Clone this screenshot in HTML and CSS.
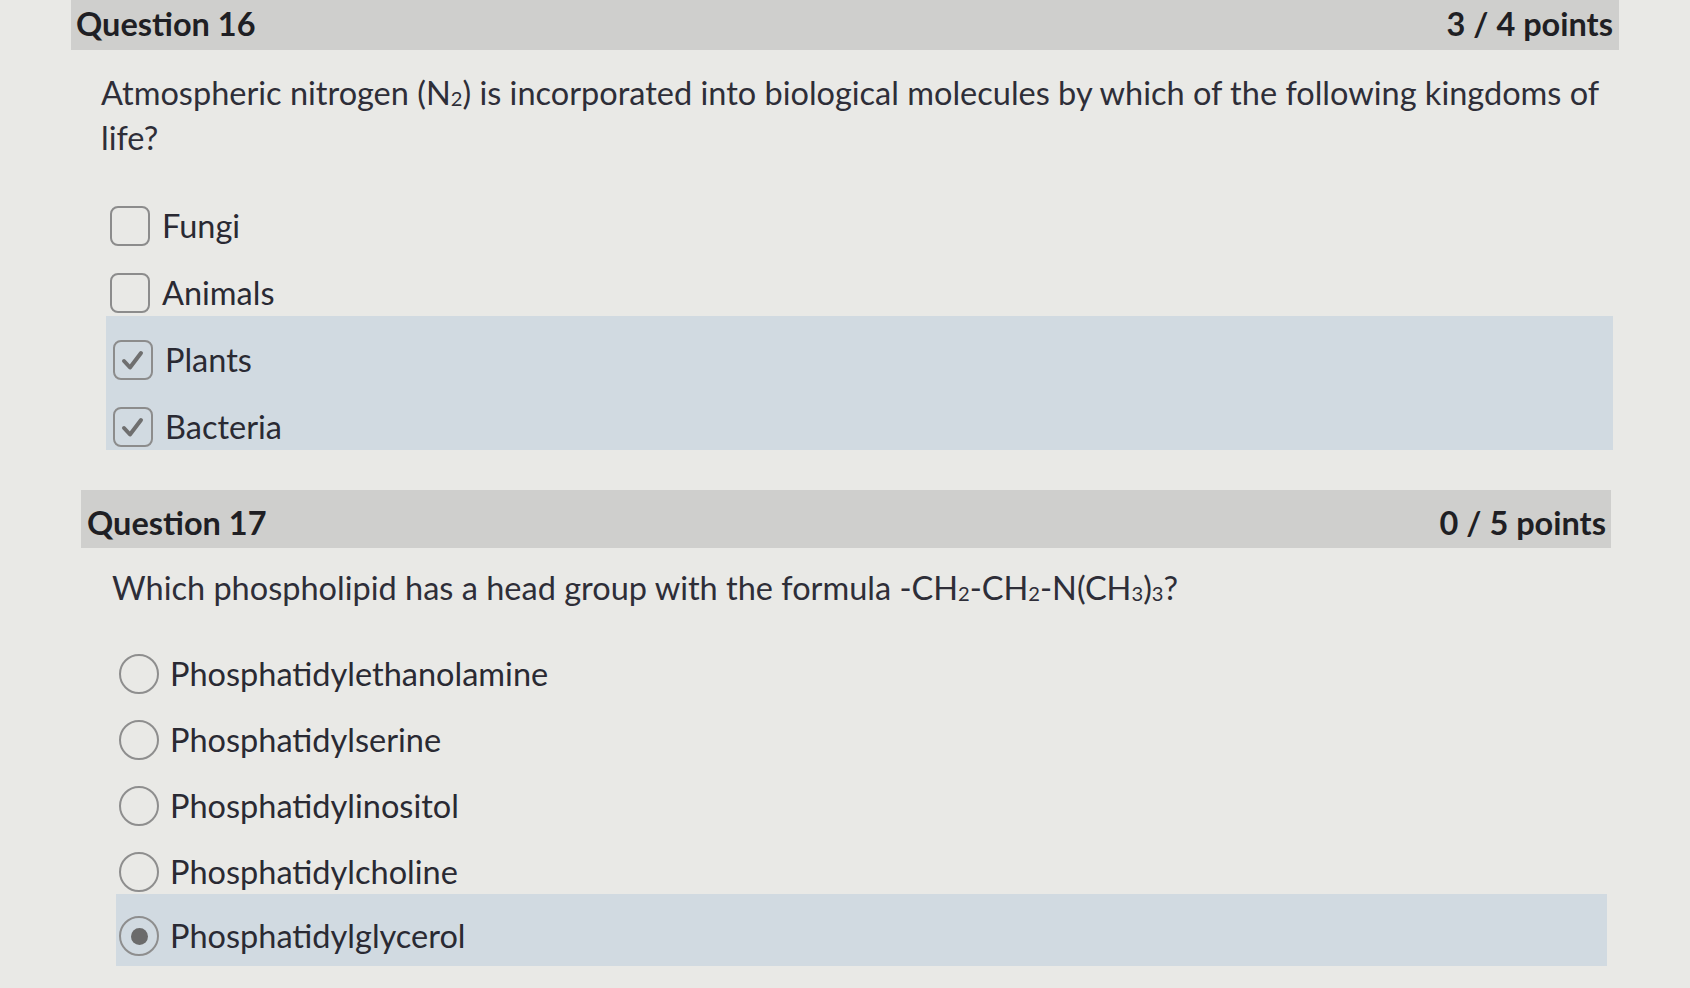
FILE: index.html
```html
<!DOCTYPE html>
<html lang="en">
<head>
<meta charset="utf-8">
<title>Quiz review</title>
<link rel="stylesheet" href="styles.css">
</head>
<body>
<div class="page">
  <section class="question q16">
    <header class="q-header">
      <span class="q-title">Question 16</span>
      <span class="q-points">3 / 4 points</span>
    </header>
    <p class="q-text">Atmospheric nitrogen (N<span class="sub">2</span>) is incorporated into biological molecules by which of the following kingdoms of life?</p>
    <ul class="options">
      <li class="option"><span class="checkbox"></span><span class="label">Fungi</span></li>
      <li class="option"><span class="checkbox"></span><span class="label">Animals</span></li>
      <li class="option selected"><span class="checkbox checked"><svg viewBox="0 0 40 40" width="40" height="40"><path d="M11 21 L17 27.5 L28 13" fill="none" stroke="#6f6f6f" stroke-width="4" stroke-linecap="round" stroke-linejoin="round"/></svg></span><span class="label">Plants</span></li>
      <li class="option selected"><span class="checkbox checked"><svg viewBox="0 0 40 40" width="40" height="40"><path d="M11 21 L17 27.5 L28 13" fill="none" stroke="#6f6f6f" stroke-width="4" stroke-linecap="round" stroke-linejoin="round"/></svg></span><span class="label">Bacteria</span></li>
    </ul>
  </section>

  <section class="question q17">
    <header class="q-header">
      <span class="q-title">Question 17</span>
      <span class="q-points">0 / 5 points</span>
    </header>
    <p class="q-text">Which phospholipid has a head group with the formula -CH<span class="sub">2</span>-CH<span class="sub">2</span>-N(CH<span class="sub">3</span>)<span class="sub">3</span>?</p>
    <ul class="options">
      <li class="option"><span class="radio"></span><span class="label">Phosphatidylethanolamine</span></li>
      <li class="option"><span class="radio"></span><span class="label">Phosphatidylserine</span></li>
      <li class="option"><span class="radio"></span><span class="label">Phosphatidylinositol</span></li>
      <li class="option"><span class="radio"></span><span class="label">Phosphatidylcholine</span></li>
      <li class="option selected"><span class="radio on"></span><span class="label">Phosphatidylglycerol</span></li>
    </ul>
  </section>
</div>
</body>
</html>
```

FILE: styles.css
```css
html, body {
  margin: 0;
  padding: 0;
}

body {
  background: #e9e9e6;
  font-family: Lato, "Open Sans", "Liberation Sans", sans-serif;
  color: #2c2c34;
  height: 988px;
  overflow: hidden;
}

.page {
  margin-top: -8px;
}

.question {
  display: flex;
  flex-direction: column;
}

.q16 {
  margin: 0 71px 0 71px;
  width: 1548px;
}

.q17 {
  margin: 40px 0 0 81px;
  width: 1530px;
}

.q-header {
  display: flex;
  justify-content: space-between;
  align-items: center;
  height: 58px;
  padding: 4px 6px 0 5px;
  box-sizing: border-box;
  background: #cfcfcd;
  font-weight: 700;
  font-size: 32.5px;
  color: #1f1f24;
}

.q17 .q-header {
  padding: 6px 5px 0 6px;
}

.q-text {
  margin: 0;
  padding: 20px 0 0 30px;
  font-size: 32.5px;
  line-height: 45px;
  color: #2e2e38;
}

.q17 .q-text {
  padding: 17px 0 0 31px;
}

.sub {
  font-size: 0.62em;
  line-height: 0;
  vertical-align: -0.05em;
}

.options {
  list-style: none;
  margin: 22px 0 0 35px;
  padding: 0;
  display: flex;
  flex-direction: column;
}

.q16 .options {
  margin-left: 35px;
  margin-right: 6px;
}

.q17 .options {
  margin: 20px 4px 0 35px;
}

.option {
  display: flex;
  align-items: center;
  gap: 12px;
  height: 67px;
  box-sizing: border-box;
  padding: 24px 0 3px 4px;
  font-size: 32.5px;
  color: #2a2a33;
}

.q17 .option {
  height: 66px;
  padding-left: 3px;
  gap: 11px;
}

.q17 .option.selected {
  height: 72px;
  padding-top: 22px;
  padding-bottom: 10px;
}

.option.selected {
  background: #d1dae1;
}

.checkbox {
  width: 40px;
  height: 40px;
  box-sizing: border-box;
  border: 2px solid #8c8c8c;
  border-radius: 8px;
  display: flex;
  align-items: center;
  justify-content: center;
  flex: none;
}

.checkbox.checked {
  margin-left: 3px;
}

.checkbox svg {
  display: block;
  margin: -2px;
}

.radio {
  width: 40px;
  height: 40px;
  box-sizing: border-box;
  border: 2px solid #8e8e8e;
  border-radius: 50%;
  flex: none;
  display: flex;
  align-items: center;
  justify-content: center;
}

.radio.on::after {
  content: "";
  width: 17px;
  height: 17px;
  border-radius: 50%;
  background: #6b6b6b;
}

.label {
  line-height: 40px;
}
```
